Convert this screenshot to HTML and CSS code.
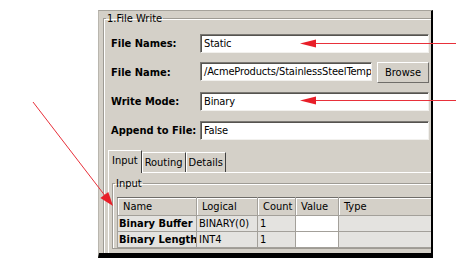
FILE: index.html
```html
<!DOCTYPE html>
<html lang="en">
<head>
    <meta charset="utf-8">
    <title>File Write</title>
    <link rel="stylesheet" href="styles.css">
</head>
<body>
    <div class="page">
        <div class="window">
            <fieldset class="group">
                <legend>1.File Write</legend>
                <div class="form">
                    <label>File Names:</label>
                    <div class="field">Static</div>
                    <label>File Name:</label>
                    <div class="file-row">
                        <div class="field">/AcmeProducts/StainlessSteelTempe</div>
                        <div class="btn">Browse</div>
                    </div>
                    <label>Write Mode:</label>
                    <div class="field">Binary</div>
                    <label>Append to File:</label>
                    <div class="field">False</div>
                </div>
                <div class="tabs">
                    <span class="tab active">Input</span>
                    <span class="tab">Routing</span>
                    <span class="tab">Details</span>
                </div>
                <div class="tab-panel">
                    <fieldset class="group inner">
                        <legend>Input</legend>
                        <table class="grid">
                            <tr>
                                <th class="c-name">Name</th>
                                <th class="c-logical">Logical</th>
                                <th class="c-count">Count</th>
                                <th class="c-value">Value</th>
                                <th class="c-type">Type</th>
                            </tr>
                            <tr>
                                <td class="name">Binary Buffer</td>
                                <td>BINARY(0)</td>
                                <td>1</td>
                                <td class="value"></td>
                                <td></td>
                            </tr>
                            <tr>
                                <td class="name">Binary Length</td>
                                <td>INT4</td>
                                <td>1</td>
                                <td class="value"></td>
                                <td></td>
                            </tr>
                        </table>
                    </fieldset>
                </div>
            </fieldset>
        </div>

        <!-- callout arrows drawn over the dialog -->
        <svg class="notes" width="474" height="271" viewBox="0 0 474 271">
            <g stroke="#e8303a" stroke-width="1" fill="#e81e28">
                <line x1="456" y1="43.5" x2="312" y2="43.5" />
                <polygon points="300,43.5 316,39.5 316,47.5" stroke="none" />
                <line x1="456" y1="100.5" x2="312" y2="100.5" />
                <polygon points="300,100.5 316,96.5 316,104.5" stroke="none" />
                <line x1="33" y1="102" x2="106" y2="197" />
                <polygon points="113,206 108.3,191.9 100.4,198" stroke="none" />
            </g>
        </svg>
    </div>
</body>
</html>
```

FILE: styles.css
```css
body {
    margin: 0;
    background: #fff;
    font-family: "DejaVu Sans Condensed", "DejaVu Sans", sans-serif;
    font-size: 11px;
    color: #000;
}

.page {
    position: relative;
    width: 474px;
    height: 271px;
    overflow: hidden;
}

.window {
    margin: 10px 0 0 98px;
    width: 332px;
    height: 242px;
    background: #d4d0c8;
    border-top: 1px solid #a6a39c;
    border-left: 1px solid #b9b6ae;
    border-right: 2px solid #000;
    border-bottom: 5px solid #000;
    overflow: hidden;
}

.group {
    margin: 1px 0 0 4px;
    width: 360px;
    padding: 9px 0 0 7px;
    border: 1px solid #9e9b94;
    box-shadow: inset 1px 1px 0 #fff;
}

.group legend {
    margin-left: -5px;
    padding: 0 1px;
    line-height: 13px;
}

.form {
    display: grid;
    grid-template-columns: 89px 1fr;
    grid-auto-rows: 19px;
    row-gap: 10px;
    width: 318px;
    align-items: center;
}

.form label {
    font-weight: bold;
    font-size: 11px;
}

.field {
    height: 19px;
    box-sizing: border-box;
    padding: 0 3px;
    line-height: 17px;
    letter-spacing: -0.15px;
    background: #fff;
    border: 1px solid;
    border-color: #7b7974 #f2f1ee #f2f1ee #7b7974;
    box-shadow: inset 1px 1px 0 #55534f;
    white-space: nowrap;
    overflow: hidden;
}

.file-row {
    display: flex;
    gap: 5px;
}

.file-row .field {
    width: 172px;
    flex: none;
}

.btn {
    width: 52px;
    height: 21px;
    flex: none;
    box-sizing: border-box;
    line-height: 19px;
    text-align: center;
    border: 1px solid;
    border-color: #fff #6f6d69 #6f6d69 #fff;
    background: #d4d0c8;
}

.tabs {
    display: flex;
    align-items: flex-end;
    height: 22px;
    margin: 10px 0 0 -3px;
}

.tab {
    height: 19px;
    line-height: 19px;
    padding: 0 2px;
    border: 1px solid;
    border-color: #fff #404040 transparent #fff;
    border-bottom: none;
}

.tab.active {
    height: 22px;
    line-height: 20px;
    padding: 0 3px;
    position: relative;
    top: 1px;
    background: #d4d0c8;
}

.tab-panel {
    margin-left: -3px;
    padding: 4px 0 0 3px;
    border-top: 1px solid #fff;
    border-left: 1px solid #fff;
    height: 100px;
}

.group.inner {
    margin: 0;
    width: 420px;
    padding: 7px 0 0 4px;
}

.group.inner legend {
    margin-left: -2px;
}

.grid {
    border-collapse: collapse;
    table-layout: fixed;
    width: 400px;
    background: #e4e3e0;
}

.grid th,
.grid td {
    border: 1px solid #a3a09a;
    padding: 0 2px;
    text-align: left;
    white-space: nowrap;
    overflow: hidden;
}

.grid th {
    height: 17px;
    font-weight: normal;
    padding-left: 5px;
    background: #d4d0c8;
    box-shadow: inset 1px 1px 0 #fff;
    border-top-color: #6f6d69;
}

.grid td {
    height: 15px;
    line-height: 15px;
}

.grid td.name {
    font-weight: bold;
    padding-left: 1px;
}

.grid td.value {
    background: #fff;
}

.c-name { width: 71px; }
.c-logical { width: 53px; }
.c-count { width: 30px; }
.c-value { width: 35px; }

.notes {
    position: absolute;
    left: 0;
    top: 0;
    pointer-events: none;
}
```
